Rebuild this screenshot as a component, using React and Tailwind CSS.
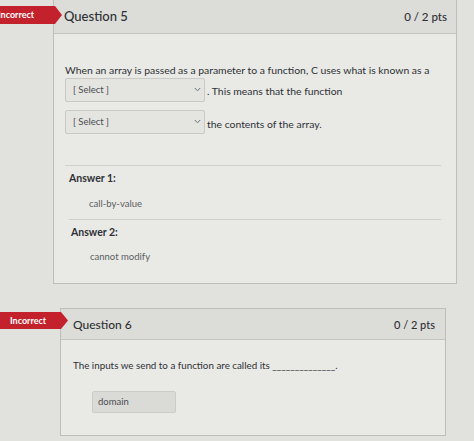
import React from "react";

function Banner({ className }) {
  return (
    <div className={"absolute flex items-center " + className}>
      <div className="h-full flex-1 bg-[#c3222c] flex items-center pl-[10px] text-[9px] font-bold text-white">
        Incorrect
      </div>
      <svg width="7" height="100%" viewBox="0 0 7 18" preserveAspectRatio="none" className="h-full">
        <polygon points="0,0 7,9 0,18" fill="#c3222c" />
      </svg>
    </div>
  );
}

function SelectBox({ h = "h-[24px]" }) {
  return (
    <div className={`w-[140px] ${h} shrink-0 flex items-center justify-between border border-[#c9c9c6] bg-[#e4e4e1] rounded-[2px] pl-[7px] pr-[3px] text-[9.5px] text-[#4a4d50]`}>
      <span>[ Select ]</span>
      <svg width="7" height="5" viewBox="0 0 7 5" className="mb-[2px]">
        <polyline points="0.8,1 3.5,3.8 6.2,1" fill="none" stroke="#6b6e70" strokeWidth="1" />
      </svg>
    </div>
  );
}

export default function App() {
  return (
    <div
      className="relative w-[474px] h-[441px] overflow-hidden bg-[#e1e1de] text-[#2e3134]"
      style={{ fontFamily: "Lato, 'Open Sans', sans-serif" }}
    >
      <div className="flex flex-col">
        {/* Question 5 */}
        <div className="relative ml-[53px] mt-[-2px] w-[404px] h-[286px] border border-[#bdbdba] bg-[#e9e9e6] flex flex-col">
          <div className="h-[35px] shrink-0 flex items-center justify-between bg-[#dcdcd9] border-b border-[#c3c3c0] pl-[10px] pr-[9px] pt-[2px]">
            <span className="text-[13px] font-medium">Question 5</span>
            <span className="text-[11.5px] font-medium">0 / 2 pts</span>
          </div>
          <div className="flex flex-col pl-[11px] pr-[15px] pt-[29px]">
            <p className="text-[10.4px] leading-[14px] whitespace-nowrap">
              When an array is passed as a parameter to a function, C uses what is known as a
            </p>
            <div className="mt-[1px] flex items-center gap-[2px]">
              <SelectBox />
              <span className="text-[10.4px] mt-[4px] whitespace-nowrap">. This means that the function</span>
            </div>
            <div className="mt-[8px] flex items-center gap-[2px]">
              <SelectBox />
              <span className="text-[10.4px] mt-[5px] whitespace-nowrap">the contents of the array.</span>
            </div>
            <div className="mt-[31px] border-t border-[#cfcfcc]" />
            <div className="pl-[4px] pt-[5px]">
              <div className="text-[10.5px] font-bold leading-[14px]">Answer 1:</div>
              <div className="pl-[20px] pt-[13px] text-[9.5px] leading-[12px] text-[#5b5e61]">call-by-value</div>
            </div>
            <div className="mt-[9px] ml-[4px] border-t border-[#cfcfcc]" />
            <div className="pl-[6px] pt-[5px]">
              <div className="text-[10.5px] font-bold leading-[14px]">Answer 2:</div>
              <div className="pl-[19px] pt-[12px] text-[9.5px] leading-[12px] text-[#5b5e61]">cannot modify</div>
            </div>
          </div>
          <Banner className="left-[-66px] top-[7px] h-[18px] w-[74px]" />
        </div>

        {/* Question 6 */}
        <div className="relative ml-[60px] mt-[24px] w-[386px] h-[128px] border border-[#bdbdba] bg-[#e9e9e6] flex flex-col">
          <div className="h-[31px] shrink-0 flex items-center justify-between bg-[#dcdcd9] border-b border-[#c3c3c0] pl-[12px] pr-[10px] pt-[2px]">
            <span className="text-[12px] font-medium">Question 6</span>
            <span className="text-[11px] font-medium">0 / 2 pts</span>
          </div>
          <div className="flex flex-col pl-[12px] pt-[18px]">
            <p className="text-[9.8px] leading-[14px] whitespace-nowrap">
              The inputs we send to a function are called its <span>______________</span>.
            </p>
            <div className="ml-[19px] mt-[19px] w-[84px] h-[22px] flex items-center pl-[5px] bg-[#dadad7] border border-[#cbcbc8] rounded-[2px] text-[9.5px] text-[#4a4d50]">
              domain
            </div>
          </div>
          <Banner className="left-[-61px] top-[3px] h-[17px] w-[68px]" />
        </div>
      </div>
    </div>
  );
}
